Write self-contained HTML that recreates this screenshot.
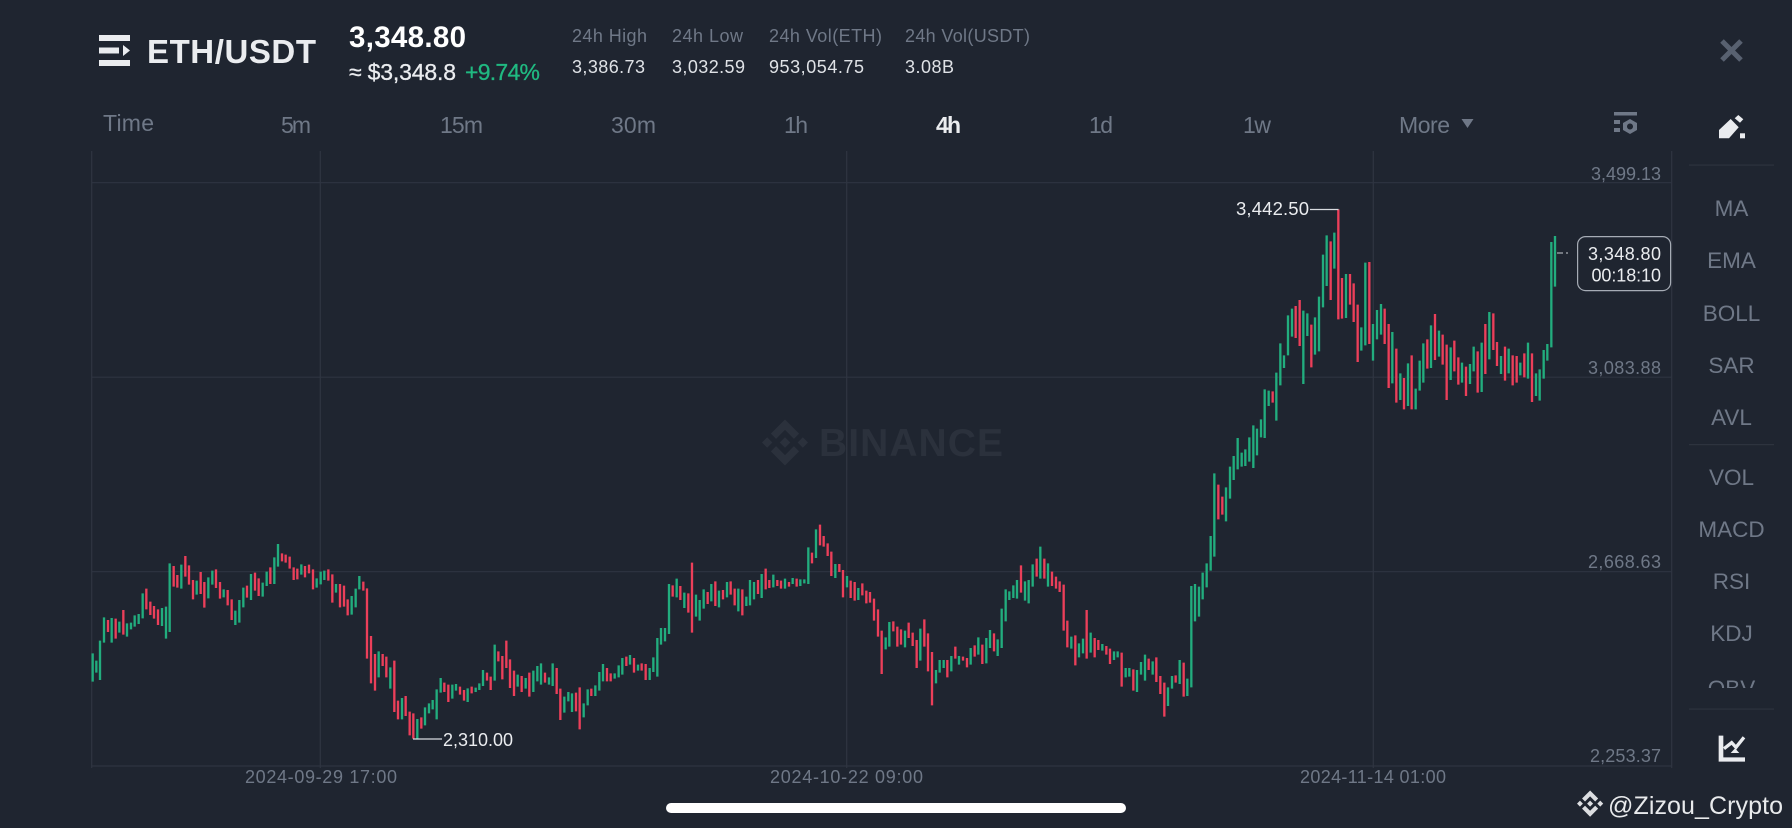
<!DOCTYPE html>
<html lang="en">
<head>
<meta charset="utf-8">
<title>ETH/USDT chart</title>
<style>
html,body{margin:0;padding:0;background:#1f2530;width:1792px;height:828px;overflow:hidden}
svg{display:block}
text{font-family:"Liberation Sans",sans-serif}
.g{fill:none;stroke:#22ad7e;stroke-width:7}
.r{fill:none;stroke:#ec3f5a;stroke-width:7}
.m{fill:#6f7887;font-size:23px}
.s{fill:#6f7887;font-size:18px}
.v{fill:#dfe2e6;font-size:18px}
.i{fill:#6f7887;font-size:22.5px;text-anchor:middle}
</style>
</head>
<body>
<svg width="1792" height="828" viewBox="0 0 1792 828" xmlns="http://www.w3.org/2000/svg">
<defs><clipPath id="pc"><rect x="1680" y="150" width="112" height="538"/></clipPath></defs>
<rect width="1792" height="828" fill="#1f2530"/>

<!-- menu icon + pair -->
<g fill="#eaecef">
<rect x="99" y="35" width="31" height="6"/>
<rect x="99" y="47.5" width="20" height="6"/>
<polygon points="123,45 130,50.5 123,56"/>
<rect x="99" y="60" width="31" height="6"/>
</g>
<text x="147" y="63" font-size="33" font-weight="bold" fill="#eaecef" textLength="169">ETH/USDT</text>
<text x="349" y="47" font-size="29.5" font-weight="bold" fill="#fff" textLength="117">3,348.80</text>
<text x="349" y="80" font-size="23" fill="#eaecef" stroke="#eaecef" stroke-width=".3" textLength="107">≈ $3,348.8</text>
<text x="465" y="80" font-size="23" fill="#20b981" stroke="#20b981" stroke-width=".3" textLength="75">+9.74%</text>

<text class="s" x="572" y="42" textLength="75">24h High</text>
<text class="s" x="672" y="42" textLength="71">24h Low</text>
<text class="s" x="769" y="42" textLength="113">24h Vol(ETH)</text>
<text class="s" x="905" y="42" textLength="125">24h Vol(USDT)</text>
<text class="v" x="572" y="73" textLength="73">3,386.73</text>
<text class="v" x="672" y="73" textLength="73">3,032.59</text>
<text class="v" x="769" y="73" textLength="95">953,054.75</text>
<text class="v" x="905" y="73" textLength="49">3.08B</text>

<!-- close -->
<path d="M1722 41L1741 60M1741 41L1722 60" stroke="#586170" stroke-width="5" fill="none"/>

<!-- timeframes -->
<text class="m" x="103" y="131" textLength="51">Time</text>
<text class="m" x="281" y="133" textLength="30">5m</text>
<text class="m" x="440" y="133" textLength="43">15m</text>
<text class="m" x="611" y="133" textLength="45">30m</text>
<text class="m" x="784" y="133" textLength="24">1h</text>
<text x="936" y="133" font-size="23" font-weight="bold" fill="#eaecef" textLength="25">4h</text>
<text class="m" x="1089" y="133" textLength="24">1d</text>
<text class="m" x="1243" y="133" textLength="28">1w</text>
<text class="m" x="1399" y="133" textLength="51">More</text>
<polygon points="1461.5,119 1473.5,119 1467.5,128" fill="#6f7887"/>

<!-- settings icon -->
<g fill="#6f7887">
<rect x="1614" y="112" width="23" height="3.5"/>
<rect x="1614" y="120" width="6" height="4"/>
<rect x="1614" y="128" width="6" height="4"/>
<path fill-rule="evenodd" d="M1630 119L1637 123V130L1630 134L1623 130V123ZM1630 123.5a3 3 0 1 0 .01 0Z"/>
</g>

<!-- pencil -->
<g fill="#eaecef">
<polygon points="1719,130 1730.7,119 1738.7,127.3 1729,138.3 1719,138.3"/>
<polygon points="1734.7,118.3 1738.3,115 1743.3,119.3 1740,122.7"/>
<rect x="1740" y="133.3" width="5" height="5"/>
</g>

<!-- right panel -->
<rect x="1689" y="164.5" width="85" height="1.2" fill="#2d333e"/>
<g clip-path="url(#pc)">
<text class="i" x="1731.5" y="216">MA</text>
<text class="i" x="1731.5" y="268">EMA</text>
<text class="i" x="1731.5" y="321">BOLL</text>
<text class="i" x="1731.5" y="373">SAR</text>
<text class="i" x="1731.5" y="425">AVL</text>
<text class="i" x="1731.5" y="485">VOL</text>
<text class="i" x="1731.5" y="537">MACD</text>
<text class="i" x="1731.5" y="589">RSI</text>
<text class="i" x="1731.5" y="641">KDJ</text>
<text class="i" x="1731.5" y="696">OBV</text>
</g>
<rect x="1689" y="444" width="85" height="1.2" fill="#2d333e"/>
<rect x="1689" y="708.5" width="85" height="1.2" fill="#2d333e"/>
<!-- indicator icon -->
<g transform="translate(1500,560) scale(.33333)">
<path d="M656 527H670V592H735V605H656Z" fill="#eaecef"/>
<path d="M672 566L695 548L708 562L732 532" fill="none" stroke="#eaecef" stroke-width="10"/>
<polygon points="692,579 718,579 705,565" fill="#eaecef"/>
</g>

<!-- grid -->
<g stroke="#2f3541" stroke-width="1.2" fill="none">
<path d="M91.7 182.7H1672M91.7 377.2H1672M91.7 571.7H1672M91.7 766H1672"/>
<path d="M91.7 151V768M320.3 151V768M846.7 151V768M1373.3 151V768M1671.7 151V768"/>
</g>

<!-- binance watermark -->
<g fill="#2b313c">
<g transform="translate(762,419.5) scale(.3633)">
<polygon points="38.73,53.2 63.3,28.64 87.88,53.22 102.18,38.93 63.3,0 24.42,38.9"/>
<polygon points="0,63.31 14.3,49.01 28.59,63.31 14.29,77.6"/>
<polygon points="38.73,73.41 63.3,97.97 87.88,73.4 102.19,87.69 63.3,126.61 24.42,87.71"/>
<polygon points="98.02,63.31 112.32,49.01 126.61,63.3 112.31,77.6"/>
<polygon points="63.3,48.8 77.8,63.3 63.3,77.8 48.8,63.3"/>
</g>
<text x="819" y="456" font-size="39" font-weight="bold" textLength="184">BINANCE</text>
</g>
<path d="M846.7 400V470" stroke="#2f3541" stroke-width="1.2"/>

<!-- axis labels -->
<text class="s" x="1591" y="180" textLength="70">3,499.13</text>
<text class="s" x="1588" y="374" textLength="73">3,083.88</text>
<text class="s" x="1588" y="568" textLength="73">2,668.63</text>
<text class="s" x="1590" y="762" textLength="71">2,253.37</text>
<text class="s" x="245" y="783" textLength="152">2024-09-29 17:00</text>
<text class="s" x="770" y="783" textLength="153">2024-10-22 09:00</text>
<text class="s" x="1300" y="783" textLength="146">2024-11-14 01:00</text>

<!-- candles part 1 -->
<g transform="translate(80,520) scale(.33333)">
<path class="g" d="M38 400V485M49 422V458M60 362V480M72 292V368M95 294V368M118 305V338M141 310V350M153 308V328M164 286V320M176 282V312M188 220V295M246 264V318M258 260V356M269 130V336M304 134V206M350 182V224M385 172V235M397 152V194M431 208V232M466 272V315M478 240V308M490 203V262M513 162V240M548 188V230M560 155V198M583 112V192M594 72V140M664 133V164M710 175V203M722 155V193M733 152V180M768 192V218M815 228V284M827 206V262M838 168V208M896 394V472M931 442V506M966 534V598M1012 597V656M1035 562V616M1047 550V580M1058 540V568M1070 508V598M1082 474V518M1117 494V536M1128 492V512M1163 505V546M1187 503V516M1198 490V510"/>
<path class="r" d="M84 300V336M107 296V356M130 270V344M199 206V268M211 245V285M222 258V296M234 268V315M281 138V200M292 165V203M316 108V170M327 136V194M339 180V238M362 156V222M373 186V263M408 148V204M420 186V236M443 210V256M455 238V300M501 197V233M525 158V212M536 175V228M571 142V192M606 100V124M617 104V128M629 110V146M641 142V180M652 146V178M675 138V172M687 134V160M699 148V208M745 148V182M757 163V248M780 192V262M792 197V260M803 238V286M850 185V212M861 205V416M873 348V490M885 402V512M908 402V438M919 410V472M943 422V576M954 542V598M977 528V588M989 575V646M1000 580V656M1024 592V626M1093 488V516M1105 494V546M1140 500V524M1152 510V542M1175 500V520"/>
</g>
<!-- candles part 2 -->
<g transform="translate(480,520) scale(.33333)">
<path class="g" d="M9 450V498M44 374V482M113 464V500M137 474V506M160 452V516M172 438V484M183 430V494M207 472V494M218 430V498M253 530V578M265 516V544M276 520V576M311 550V592M323 508V556M346 496V528M358 456V512M369 432V484M404 460V476M416 436V472M427 414V464M450 405V434M474 434V452M509 444V480M520 412V456M532 354V470M543 324V374M555 324V364M567 192V342M590 176V232M613 218V264M648 224V290M659 240V302M671 208V266M694 192V244M717 212V262M741 186V232M775 206V274M799 230V258M810 180V256M822 186V238M845 162V234M880 164V202M915 176V206M938 174V192M961 178V198M973 178V190M985 82V192M1008 28V114M1066 132V174M1101 168V202M1135 204V240"/>
<path class="r" d="M21 458V482M32 470V510M55 394V424M67 408V478M79 362V444M90 418V504M102 452V528M125 468V516M148 458V530M195 458V488M230 444V522M241 506V600M288 518V574M299 502V628M334 506V528M381 444V484M392 460V484M439 410V438M462 414V458M485 430V452M497 432V480M578 196V230M601 198V240M625 220V278M636 128V338M683 216V252M706 184V258M729 210V238M752 184V224M764 206V256M787 208V286M834 180V222M857 146V208M868 180V204M892 180V198M903 182V206M927 186V200M950 176V200M996 98V130M1020 14V76M1031 48V80M1043 70V108M1054 95V168M1078 132V156M1089 150V232M1112 182V234M1124 186V242M1147 190V226M1159 212V250M1170 216V248M1182 236V302M1194 268V350"/>
</g>
<!-- candles part 3 -->
<g transform="translate(880,520) scale(.33333)">
<path class="g" d="M17 352V388M28 306V380M75 332V382M121 326V422M168 450V490M179 420V458M191 420V444M214 408V454M237 408V434M272 384V434M295 352V404M319 354V430M330 330V384M353 358V408M365 266V384M377 208V304M388 214V240M400 196V234M411 180V236M435 184V242M446 180V250M458 133V200M481 80V176M504 130V200M574 350V386M597 370V412M609 356V400M632 338V398M667 372V392M702 394V420M713 394V412M737 444V472M748 444V470M771 450V516M783 426V464M795 404V482M818 424V464M864 502V558M876 468V506M899 420V492M922 476V528M934 198V502M945 192V304M957 200V290M968 158V238M980 130V202M992 48V152"/>
<path class="r" d="M5 332V462M40 304V334M52 320V380M63 328V374M86 308V354M98 338V378M110 360V444M133 298V380M144 340V454M156 396V556M202 420V472M226 380V416M249 410V422M261 414V442M284 376V410M307 374V432M342 340V394M423 136V218M470 116V170M493 116V176M516 155V198M528 170V206M539 184V216M551 194V332M562 302V382M586 346V436M620 270V416M644 354V412M655 360V390M679 378V404M690 386V432M725 398V500M760 448V512M806 416V450M829 412V486M841 468V522M853 488V590M887 466V488M911 428V530"/>
</g>
<!-- candles part 4 -->
<g transform="translate(1180,380) scale(.33333)">
<path class="g" d="M103 280V530M138 322V424M150 260V356M161 228V300M173 174V268M185 218V260M196 208V258M208 172V245M220 136V264M231 146V226M243 118V172M254 28V174M266 32V78"/>
<path class="r" d="M115 314V418M127 350V404M278 34V68"/>
</g>
<!-- candles part 5 -->
<g transform="translate(1200,190) scale(.33333)">
<path class="g" d="M229 548V692M241 460V586M252 496V534M264 376V496M276 356V440M310 362V582M322 370V438M345 382V494M357 320V484M369 194V352M380 136V288M403 128V236M438 252V384M484 412V482M496 218V466M519 402V512M531 360V448M543 342V434M577 426V580M601 550V630M624 520V648M647 596V658M659 512V602M670 460V578M693 406V534M717 422V500M752 472V570M786 518V578M810 522V582M821 470V544M845 458V606M868 366V508M903 498V552M926 476V550M961 518V556M984 458V566M1008 550V618M1019 538V632M1031 480V566M1042 462V512M1054 156V472M1065 138V290"/>
<path class="r" d="M287 348V444M299 330V468M334 404V532M392 154V330M415 58V388M426 264V386M450 252V344M461 280V396M473 344V516M508 216V462M554 356V462M566 402V594M589 476V638M612 564V658M635 496V658M682 448V536M705 372V510M728 434V524M740 464V630M763 452V544M775 502V584M798 530V618M833 484V608M856 402V552M880 370V480M891 456V528M915 470V572M938 496V586M950 498V578M973 490V562M996 490V636"/>
</g>

<!-- annotations -->
<path d="M1310 209.5H1338.5" stroke="#d8dbdf" stroke-width="1.2" fill="none"/>
<text x="1236" y="215" font-size="18.5" fill="#eaecef" textLength="73">3,442.50</text>
<path d="M413 739H442" stroke="#d8dbdf" stroke-width="1.2" fill="none"/>
<text x="443" y="746" font-size="18" fill="#eaecef" textLength="70">2,310.00</text>

<!-- price box -->
<path d="M1557 253H1563M1566 253H1568" stroke="#c9cdd2" stroke-width="1.1" fill="none"/>
<rect x="1577.6" y="236.6" width="93" height="54" rx="8" fill="#1f2530" stroke="#a6acb5" stroke-width="1.2"/>
<text x="1588" y="260" font-size="18" fill="#eaecef" textLength="73">3,348.80</text>
<text x="1591.5" y="281.5" font-size="18" fill="#eaecef" textLength="69.5">00:18:10</text>

<!-- home bar -->
<rect x="666" y="803" width="460" height="10" rx="5" fill="#fff"/>

<!-- user watermark -->
<g fill="#dcdee1" transform="translate(1577,790.5) scale(.207)">
<polygon points="38.73,53.2 63.3,28.64 87.88,53.22 102.18,38.93 63.3,0 24.42,38.9"/>
<polygon points="0,63.31 14.3,49.01 28.59,63.31 14.29,77.6"/>
<polygon points="38.73,73.41 63.3,97.97 87.88,73.4 102.19,87.69 63.3,126.61 24.42,87.71"/>
<polygon points="98.02,63.31 112.32,49.01 126.61,63.3 112.31,77.6"/>
<polygon points="63.3,48.8 77.8,63.3 63.3,77.8 48.8,63.3"/>
</g>
<text x="1608" y="814" font-size="25" fill="#e8eaec" textLength="175">@Zizou_Crypto</text>
</svg>
</body>
</html>
